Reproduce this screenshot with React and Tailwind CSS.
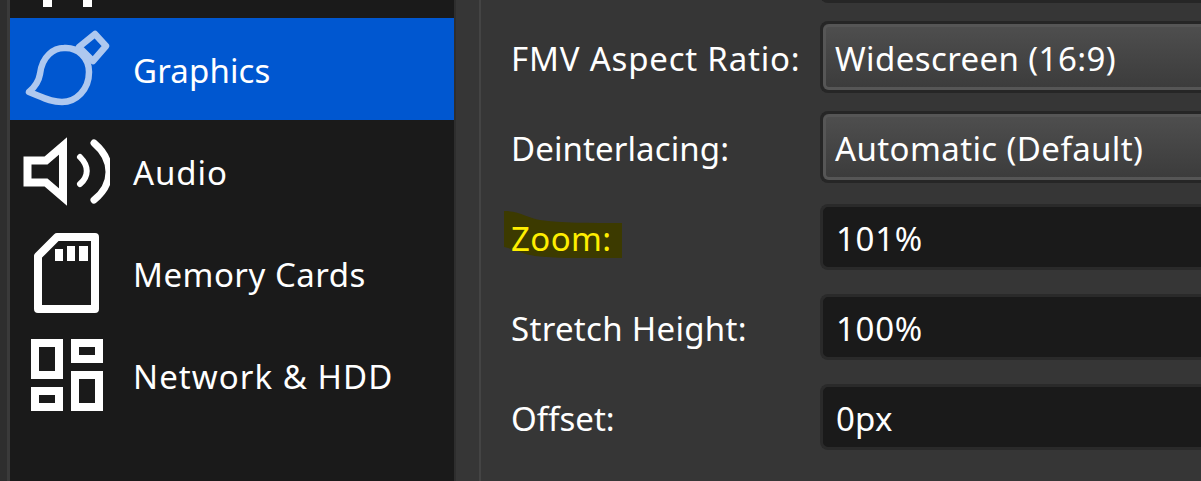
const labelFont = "font-['Noto_Sans','Open_Sans',sans-serif]";

function TopIcon() {
  return (
    <svg width="100" height="102" viewBox="10 -84 100 102" fill="#fff">
      <rect x="43" y="-12" width="9" height="19" />
      <rect x="83" y="-12" width="9" height="19" />
    </svg>
  );
}

function BrushIcon() {
  return (
    <svg width="100" height="102" viewBox="10 18 100 102" fill="none" stroke="#aec8ef" strokeWidth="6.5" strokeLinejoin="round">
      <path d="M95 34 L106 46 L93 61 L79 47 Z" />
      <path d="M29 92 C36 86 39 80 40 74 C42 56 54 48 64 48 C78 47 89 58 89 72 C89 90 76 102 62 102 C50 102 42 97 29 92 Z" />
    </svg>
  );
}

function SpeakerIcon() {
  return (
    <svg width="100" height="102" viewBox="10 120 100 102" fill="none" stroke="#fff" strokeWidth="8">
      <path d="M27.5 160.5 H46 L63 146 V197 L46 182.5 H27.5 Z" />
      <path d="M80 157 C89 166 89 176 80 184" strokeWidth="6" strokeLinecap="round" />
      <path d="M94 143 C114 160 114 184 94 200" strokeWidth="7" strokeLinecap="round" />
    </svg>
  );
}

function CardIcon() {
  return (
    <svg width="100" height="102" viewBox="10 222 100 102" fill="none">
      <path d="M57 237 H95 V309 H38 V256 Z" stroke="#fff" strokeWidth="8" strokeLinejoin="round" />
      <rect x="55" y="249" width="8" height="12" fill="#fff" />
      <rect x="67" y="246" width="8" height="15" fill="#fff" />
      <rect x="79" y="246" width="9" height="15" fill="#fff" />
    </svg>
  );
}

function GridIcon() {
  return (
    <svg width="100" height="102" viewBox="10 324 100 102" fill="none" stroke="#fff" strokeWidth="8">
      <rect x="35" y="343" width="24" height="32" />
      <rect x="75" y="343" width="24" height="16" />
      <rect x="35" y="391" width="24" height="16" />
      <rect x="75" y="375" width="24" height="32" />
    </svg>
  );
}

function NavItem({ icon, label, active, className = "", labelClass = "" }) {
  return (
    <div className={`flex h-[102px] items-center ${active ? "bg-[#0057d0]" : ""} ${className}`}>
      <div className="w-[123px] shrink-0">{icon}</div>
      <span className={`pt-[3px] text-[33px] leading-none text-white ${labelClass}`}>{label}</span>
    </div>
  );
}

function ZoomMark() {
  return (
    <svg className="absolute left-[23px] top-[19px]" width="118" height="47" viewBox="504 211 118 47">
      <path d="M504 211 C520 211 528 218 540 220 C560 223 590 223 622 223 V258 C590 258 560 259 535 256 C522 254 514 249 504 247 Z" fill="#3c3a00" />
    </svg>
  );
}

function Field({ label, value, kind, highlight, className = "", labelClass = "", valueClass = "" }) {
  return (
    <div className={`flex h-[90px] items-center ${className}`}>
      <div className="relative flex h-full w-[339px] shrink-0 items-center pl-[30px]">
        {highlight && <ZoomMark />}
        <span className={`relative pt-[3px] text-[33px] leading-none ${highlight ? "text-[#ffee00]" : "text-white"} ${labelClass}`}>{label}</span>
      </div>
      {kind === "select" ? (
        <div className="h-[72px] flex-1 rounded-l-lg border-[3px] border-r-0 border-[#262626]">
          <div className="flex h-full items-center rounded-l-md border-[3px] border-r-0 border-[#565656] bg-gradient-to-b from-[#4e4e4e] to-[#3c3c3c] pl-[9px]">
            <span className={`pt-[3px] text-[33px] leading-none text-white ${valueClass}`}>{value}</span>
          </div>
        </div>
      ) : (
        <div className="flex h-[66px] flex-1 items-center rounded-l-lg border-[3px] border-r-0 border-[#2a2a2a] bg-[#1a1a1a] pl-[13px]">
          <span className={`pt-[3px] text-[33px] leading-none text-white ${valueClass}`}>{value}</span>
        </div>
      )}
    </div>
  );
}

export default function App() {
  return (
    <div className={`flex h-[481px] w-[1201px] overflow-hidden bg-[#363636] ${labelFont}`}>
      <div className="h-full w-[10px] shrink-0 border-r-[3px] border-[#3a3a3a] bg-[#2e2e2e]" />
      <aside className="h-full w-[444px] shrink-0 overflow-hidden bg-[#1a1a1a]">
        <NavItem label="" icon={<TopIcon />} className="-mt-[84px]" />
        <NavItem active label="Graphics" icon={<BrushIcon />} labelClass="tracking-[0.15px]" />
        <NavItem label="Audio" icon={<SpeakerIcon />} labelClass="tracking-[0.9px]" />
        <NavItem label="Memory Cards" icon={<CardIcon />} labelClass="tracking-[0.5px]" />
        <NavItem label="Network & HDD" icon={<GridIcon />} labelClass="tracking-[1.05px]" />
      </aside>
      <div className="h-full w-[2px] shrink-0 bg-[#2e2e2e]" />
      <main className="ml-[23px] h-full flex-1 overflow-hidden border-l-[2px] border-[#444]">
        <Field label="" value="" kind="select" className="-mt-[78px]" />
        <Field label="FMV Aspect Ratio:" value="Widescreen (16:9)" kind="select" labelClass="tracking-[0.8px]" valueClass="tracking-[0.4px]" />
        <Field label="Deinterlacing:" value="Automatic (Default)" kind="select" labelClass="tracking-[0.1px]" valueClass="tracking-[0.4px]" />
        <Field label="Zoom:" value="101%" highlight labelClass="tracking-[0.4px]" valueClass="tracking-[0.7px]" />
        <Field label="Stretch Height:" value="100%" labelClass="tracking-[0.3px]" valueClass="tracking-[0.7px]" />
        <Field label="Offset:" value="0px" valueClass="tracking-[0.2px]" />
      </main>
    </div>
  );
}
